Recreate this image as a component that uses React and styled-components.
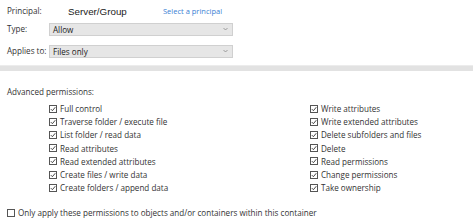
import React from "react";
import styled, { createGlobalStyle } from "styled-components";

const Global = createGlobalStyle`
  html, body { margin: 0; padding: 0; background: #fff; }
  body { font-family: "Open Sans", "Noto Sans", sans-serif; color: #333; }
`;

const Page = styled.div`
  width: 474px;
  height: 223px;
  overflow: hidden;
  background: #fff;
`;

const Top = styled.div`
  display: grid;
  grid-template-columns: 42px 184px;
  padding: 4px 0 0 7px;
  align-items: center;
`;

const Label = styled.div`
  font-size: 8.1px;
  height: ${(p) => p.$h || 22}px;
  line-height: ${(p) => p.$h || 22}px;
  white-space: nowrap;
`;

const PrincipalRow = styled.div`
  display: flex;
  align-items: center;
  height: 14px;
`;

const PrincipalName = styled.span`
  font-family: "Liberation Sans", Arial, sans-serif;
  font-size: 9.8px;
  color: #222;
  margin-left: 19px;
  width: 95px;
  flex: none;
`;

const Link = styled.span`
  font-size: 7.5px;
  color: #3a7fd4;
  white-space: nowrap;
`;

const Select = styled.div`
  height: 11px;
  border: 1px solid #d0d0d0;
  background: #e6e6e6;
  display: flex;
  align-items: center;
  justify-content: space-between;
  padding: 0 4px 0 3px;
  font-size: 8.1px;
  color: #222;
`;

const Chevron = styled.svg`
  width: 5px;
  height: 4px;
`;

const Bar = styled.div`
  margin-top: 3px;
  height: 5px;
  width: 473px;
  background: #e2e2e2;
  border-top: 1px solid #ececec;
`;

const Section = styled.div`
  padding: 15px 0 0 7px;
`;

const Heading = styled.div`
  font-size: 8.1px;
  height: 12px;
  line-height: 12px;
`;

const Columns = styled.div`
  display: grid;
  grid-template-columns: 261px auto;
  padding: 4px 0 0 49px;
`;

const List = styled.div`
  display: flex;
  flex-direction: column;
`;

const Item = styled.div`
  display: flex;
  align-items: center;
  height: 13.2px;
  font-size: 8.1px;
  white-space: nowrap;
`;

const Box = styled.span`
  width: 6px;
  height: 6px;
  border: 1px solid #555;
  margin-right: 3px;
  display: inline-flex;
  align-items: center;
  justify-content: center;
  flex: none;
`;

const Footer = styled(Item)`
  margin: 12px 0 0 7px;
`;

const Check = ({ on = true }) => (
  <Box>
    {on && (
      <svg width="6" height="6" viewBox="0 0 6 6">
        <path d="M0.8 3.1 L2.4 4.7 L5.3 1.2" fill="none" stroke="#333" strokeWidth="0.9" />
      </svg>
    )}
  </Box>
);

const left = [
  "Full control",
  "Traverse folder / execute file",
  "List folder / read data",
  "Read attributes",
  "Read extended attributes",
  "Create files / write data",
  "Create folders / append data",
];
const right = [
  "Write attributes",
  "Write extended attributes",
  "Delete subfolders and files",
  "Delete",
  "Read permissions",
  "Change permissions",
  "Take ownership",
];

const Dropdown = ({ value }) => (
  <Select>
    <span>{value}</span>
    <Chevron viewBox="0 0 5 4">
      <path d="M0.5 1 L2.5 3 L4.5 1" fill="none" stroke="#888" strokeWidth="0.8" />
    </Chevron>
  </Select>
);

export default function App() {
  return (
    <Page>
      <Global />
      <Top>
        <Label $h={14}>Principal:</Label>
        <PrincipalRow>
          <PrincipalName>Server/Group</PrincipalName>
          <Link>Select a principal</Link>
        </PrincipalRow>
        <Label>Type:</Label>
        <Dropdown value="Allow" />
        <Label>Applies to:</Label>
        <Dropdown value="Files only" />
      </Top>
      <Bar />
      <Section>
        <Heading>Advanced permissions:</Heading>
      </Section>
      <Columns>
        <List>
          {left.map((t) => (
            <Item key={t}>
              <Check />
              {t}
            </Item>
          ))}
        </List>
        <List>
          {right.map((t) => (
            <Item key={t}>
              <Check />
              {t}
            </Item>
          ))}
        </List>
      </Columns>
      <Footer>
        <Check on={false} />
        Only apply these permissions to objects and/or containers within this container
      </Footer>
    </Page>
  );
}
